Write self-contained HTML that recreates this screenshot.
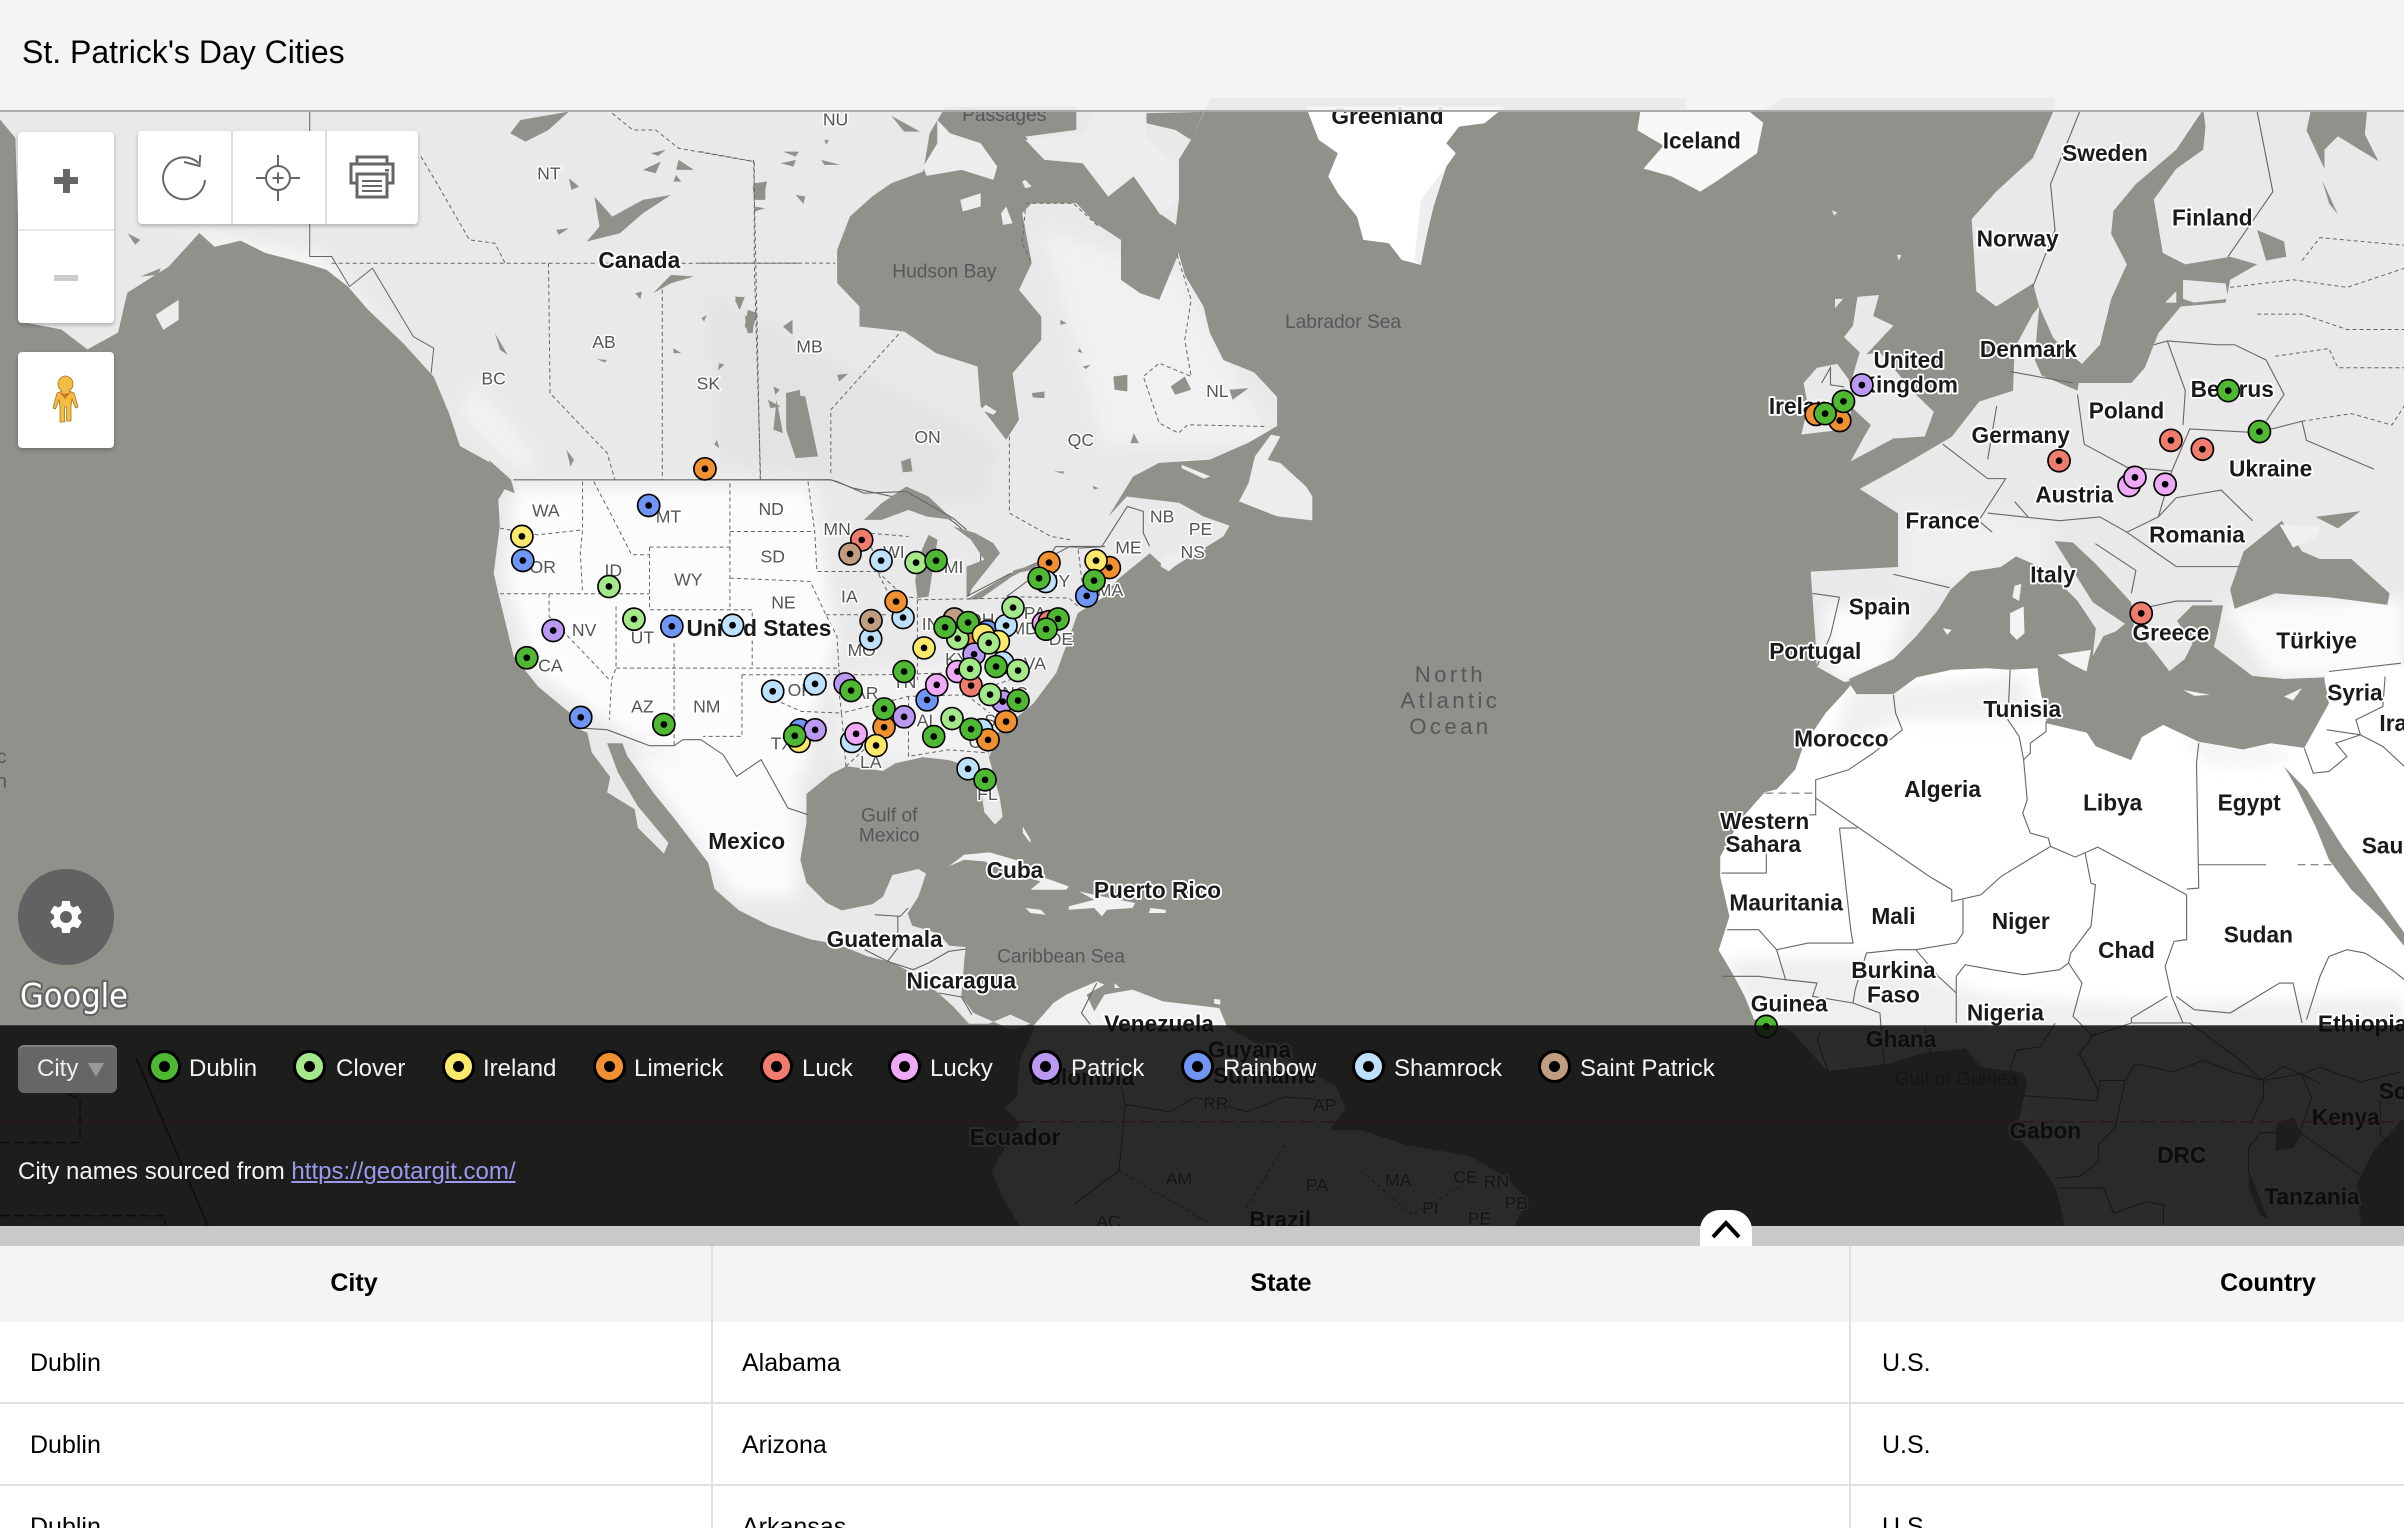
<!DOCTYPE html>
<html lang="en">
<head>
<meta charset="utf-8">
<title>St. Patrick's Day Cities</title>
<style>
html,body{margin:0;padding:0;background:#fff}
#root{position:relative;width:2404px;height:1528px;overflow:hidden;font-family:"Liberation Sans",sans-serif;color:#000}
#map{position:absolute;left:0;top:0}
.abs{position:absolute}
.c{font:bold 14.8px "Liberation Sans",sans-serif;fill:#1a1a1a;stroke:#fff;stroke-width:2.4px;paint-order:stroke;stroke-linejoin:round;text-anchor:middle}
.s{font:11.5px "Liberation Sans",sans-serif;fill:#555;stroke:#fff;stroke-width:2px;paint-order:stroke;stroke-linejoin:round;text-anchor:middle}
.w{font:12.5px "Liberation Sans",sans-serif;fill:#55575c;text-anchor:middle}
.b{fill:none;stroke:#666;stroke-width:1.1px;vector-effect:non-scaling-stroke}
.d{fill:none;stroke:#666;stroke-width:1px;stroke-dasharray:4 3;vector-effect:non-scaling-stroke}
#mk circle{r:7.2px;stroke-width:1.1px}
#mk2 circle{r:2.2px}
#z7 circle{r:33px}
#z7 circle[stroke=none]{r:10px}
.lg{position:absolute;width:33px;height:33px;top:1050px;box-sizing:border-box;border:3px solid #000;border-radius:50%}
.lg:after{content:"";position:absolute;left:8px;top:8px;width:11px;height:11px;background:#000;border-radius:50%}
.lt{position:absolute;top:1055px;font-size:24px;line-height:28px;color:#f4f4f4;white-space:nowrap}
.td{position:absolute;font-size:25px;line-height:30px;white-space:nowrap}
.th{position:absolute;font-size:25px;line-height:30px;font-weight:bold;white-space:nowrap;transform:translateX(-50%)}
.ctl{position:absolute;background:#fff;border-radius:4px;box-shadow:0 2px 4px rgba(0,0,0,.25)}
</style>
</head>
<body>
<div id="root">
<svg id="map" width="2404" height="1528" viewBox="0 0 1568 997" preserveAspectRatio="none" xmlns="http://www.w3.org/2000/svg">
<defs>
<filter id="bl" x="-20%" y="-20%" width="140%" height="140%"><feGaussianBlur stdDeviation="5"/></filter>
<polygon id="naL" points="0,60 0,78 10,90 14,210 40,215 57,228 77,217 83,191 110,174 130,152 140,161 157,157 173,165 200,172 213,176 227,187 240,202 263,224 283,246 293,270 300,291 320,302 333,313 325,326 326,343 322,374 325,387 335,428 351,448 374,467 378,476 383,478 386,491 398,507 396,517 414,528 416,540 433,557 436,550 416,526 403,504 396,485 406,485 409,493 426,517 439,533 462,563 466,580 482,594 502,604 529,613 546,616 566,624 582,628 599,637 612,648 622,657 632,668 645,668 659,662 672,668 660,672 635,661 627,650 629,626 630,618 619,617 612,609 595,604 592,596 599,585 604,570 599,567 582,571 576,585 569,590 549,594 539,589 526,576 522,561 526,537 526,518 542,505 552,500 576,503 584,498 602,494 619,496 635,501 639,509 642,530 649,538 654,533 652,520 645,494 650,483 651,478 674,459 689,439 697,417 703,400 721,389 729,378 750,361 762,372 798,350 802,343 785,337 769,328 735,324 723,337 739,311 756,302 789,300 814,289 833,278 833,259 818,243 798,235 789,217 785,200 773,180 769,166 766,155 769,130 769,104 777,91 785,74 792,60"/>
<polygon id="euL" points="1340,60 1340,71 1326,103 1302,125 1286,143 1289,190 1302,200 1326,185 1330,200 1326,205 1314,227 1313,255 1291,262 1273,285 1244,302 1235,307 1213,319 1238,335 1238,370 1181,373 1184,415 1185,435 1203,445 1208,444 1568,520 1568,60"/>
<polygon id="afL" points="1207,447 1203,452 1191,465 1176,487 1171,502 1159,515 1151,517 1135,535 1122,559 1122,572 1128,598 1121,620 1130,635 1138,650 1144,665 1168,672 1192,699 1232,694 1255,687 1282,684 1292,696 1320,700 1322,707 1318,725 1315,740 1331,760 1341,775 1347,800 1540,800 1537,773 1548,751 1568,729 1568,434 1519,438 1516,443 1519,459 1503,488 1481,485 1463,489 1434,484 1411,473 1397,481 1390,496 1367,487 1361,478 1335,472 1330,446 1329,436 1311,437 1296,436 1273,437 1250,442 1235,453 1211,453"/>
<clipPath id="cNa"><use href="#naL"/></clipPath>
<clipPath id="cEu"><use href="#euL"/></clipPath>
<clipPath id="cAf"><use href="#afL"/></clipPath>
</defs>
<rect width="1568" height="997" fill="#90918a"/>

<!-- North America -->
<use href="#naL" fill="#e9e9e9"/>
<g clip-path="url(#cNa)"><g filter="url(#bl)">
<polygon fill="#fcfcfc" points="335,318 530,318 545,420 530,470 525,505 470,505 410,480 350,440 330,380"/>
<polygon fill="#fbfbfb" points="412,490 520,505 520,585 480,585 440,530"/>
<polygon fill="#f5f5f5" points="120,150 210,165 250,215 225,215 170,185"/>
<polygon fill="#f2f2f2" points="300,270 340,310 350,300 310,250"/>
<polygon fill="#f2f2f2" points="545,440 660,430 640,495 545,495"/>
<polygon fill="#e3e3e3" points="460,190 650,290 640,330 470,300"/>
<polygon fill="#f1f1f1" points="680,150 770,180 830,290 720,290"/>
</g></g>

<!-- Hudson Bay and northern water -->
<g transform="translate(456.6,65.2) scale(.416,.2174)">
<polygon fill="#90918a" points="385,20 590,20 590,90 510,110 540,170 600,190 640,290 680,230 720,340 750,380 750,462 720,600 690,580 660,540 660,420 620,370 590,310 520,310 505,340 520,490 500,570 535,650 535,720 490,820 500,960 480,1020 440,920 435,800 370,760 320,695 250,680 250,620 215,550 215,450 235,350 270,290 300,250 350,215 360,100"/>
<polygon fill="#ededed" points="372,60 392,100 440,130 466,200 460,240 410,210 355,228 350,200 372,130"/>
<polygon fill="#ededed" points="440,280 440,320 412,335 408,300"/>
<polygon fill="#ededed" points="480,320 490,370 475,375 472,340"/>
<polygon fill="#ededed" points="510,240 520,260 510,265 505,245"/>
<polygon fill="#90918a" points="300,48 345,95 320,95"/>
<polygon fill="#90918a" points="690,40 790,36 770,120 745,90 700,70"/>
<polygon fill="#ededed" points="510,120 600,100 620,38 700,38 700,110 750,200 750,300 722,345 680,225 640,290 600,190 540,180"/>
<polygon fill="#ededed" points="448,915 465,935 460,945 440,930"/>
<polygon fill="#90918a" points="135,880 165,890 185,1070 150,1075 135,990"/>
<polygon fill="#90918a" points="120,900 130,1000 115,990"/>
<polygon fill="#90918a" points="85,250 105,245 100,290 85,295"/>
<polygon fill="#90918a" points="75,630 90,640 80,700 70,680"/>
<polygon fill="#90918a" points="648,830 670,825 670,875 650,870"/>
<polygon fill="#90918a" points="520,880 540,875 540,895 522,893"/>
<polygon fill="#90918a" points="315,1085 330,1075 333,1115 318,1118"/>
<g fill="#90918a"><polygon points="130,155 155,155 150,170"/><polygon points="190,180 220,195 195,195"/><polygon points="150,285 165,290 162,312"/><polygon points="195,120 202,120 198,135"/><polygon points="55,590 70,592 60,625"/><polygon points="130,680 145,660 145,705"/><polygon points="215,825 232,822 218,845"/><polygon points="30,790 38,795 28,812"/><polygon points="115,860 125,870 118,885"/><polygon points="565,660 575,670 565,675"/><polygon points="595,745 600,760 592,755"/><polygon points="600,800 612,795 605,808"/><polygon points="555,1115 570,1115 570,1122"/><polygon points="738,860 760,830 770,870 745,885"/><polygon points="680,1000 688,1030 675,1030"/><polygon points="615,1158 625,1165 618,1170"/><polygon points="830,870 860,865 835,900"/></g>
<!-- Newfoundland & Anticosti -->
<polygon fill="#ededed" points="895,1005 910,1010 890,1080 910,1090 950,1160 960,1190 960,1262 905,1250 845,1205 860,1150 870,1070"/>
<polygon fill="#ededed" points="755,1095 800,1130 790,1137 755,1105"/>
<polygon fill="#ededed" points="725,1370 765,1345 750,1390 735,1415 722,1400"/>
<!-- Greenland -->
<polygon fill="#fff" points="950,20 1262,20 1230,70 1190,80 1170,130 1185,160 1170,200 1150,320 1140,400 1130,495 1100,480 1080,430 1040,420 1030,350 1000,280 985,230 1000,160 970,120"/>
<polygon fill="#eeeeee" points="1170,200 1150,320 1140,400 1130,495 1120,480 1130,300"/>
<polyline class="d" points="0,155 85,185 85,490 95,1140"/>
<polyline class="d" points="0,490 212,490"/>
<polyline class="d" points="205,1120 205,930 315,695"/>
<polyline class="d" points="485,1010 485,1240 550,1310 580,1320"/>
<polyline class="d" points="510,310 585,310 625,380"/>
<polyline class="d" points="748,465 770,600 760,720 770,830 720,790 695,830 720,970 750,1000 765,975 885,980"/>
<polyline class="d" points="510,330 505,430 520,490"/>
<polyline class="b" points="205,1140 240,1165 300,1190 330,1180 400,1270 440,1340 440,1400 420,1490"/>
<polyline class="b" points="630,1340 580,1340 540,1380 490,1420"/>
<polyline class="b" points="630,1340 670,1220 695,1235 695,1300 705,1340"/>
<polyline class="b" points="0,1140 205,1140"/>
</g>

<!-- Alaska / BC lines, zoom 1 -->
<g transform="scale(.3328,.2174)">
<polygon fill="#90918a" points="1165,590 1200,650 1260,600 1315,585 1260,640 1215,700 1150,725 1175,680"/>
<polygon fill="#90918a" points="1020,360 1115,335 1075,390 1030,425 1000,400"/>
<polygon fill="#90918a" points="1280,880 1315,825 1360,830 1315,850"/>
<polygon fill="#90918a" points="1475,560 1500,545 1500,600 1478,600"/>
<polygon fill="#90918a" points="1460,950 1480,935 1475,1000 1465,1000"/>
<polygon fill="#90918a" points="1540,1180 1568,1170 1568,1300 1545,1250"/>
<polygon fill="#90918a" points="250,700 275,720 265,735"/>
<polygon fill="#90918a" points="275,830 315,805 310,825"/>
<polygon fill="#ededed" points="305,945 350,900 350,960 320,990"/>
<polygon fill="#90918a" points="0,1200 35,1180 35,1240"/>
<g fill="#90918a"><polygon points="1115,535 1135,560 1120,570"/><polygon points="1260,510 1295,485 1285,520"/><polygon points="1330,480 1360,510 1325,510"/><polygon points="1325,525 1335,545 1320,545"/><polygon points="1275,460 1305,450 1290,468"/><polygon points="1480,620 1500,625 1478,635"/><polygon points="1530,490 1560,480 1555,500"/><polygon points="1440,900 1460,890 1450,930"/><polygon points="1375,955 1385,945 1380,965"/><polygon points="1245,880 1258,875 1255,898"/><polygon points="970,1000 995,1065 980,1050"/><polygon points="1170,1078 1190,1080 1185,1088"/><polygon points="1405,1320 1410,1345 1400,1335"/><polygon points="1110,1350 1125,1380 1118,1400"/><polygon points="1320,1045 1335,1060 1320,1060"/><polygon points="1505,1200 1530,1220 1510,1225"/><polygon points="1090,690 1115,685 1095,705"/></g>
<polyline class="b" style="stroke-width:1px" points="607,335 607,770 650,770 685,860 730,805 810,1010 850,1045 845,1120"/>
<polyline class="d" points="650,790 1568,790"/>
<polyline class="d" points="1075,790 1078,1180 1190,1360 1205,1440"/>
<polyline class="d" points="1298,870 1298,1440"/>
<polyline class="d" points="1477,480 1490,1440"/>
<polyline class="d" points="1200,340 1240,390 1285,390 1330,445 1477,485"/>
<polyline class="d" points="825,470 860,560 920,720 970,730 990,790"/>
</g>

<!-- Great lakes, borders US, zoom 4 -->
<g transform="translate(313,287) scale(.2912,.2174)">
<polygon fill="#90918a" points="860,240 900,190 955,140 1005,170 1060,240 1000,230 960,210 900,240"/>
<polygon fill="#90918a" points="975,420 990,330 1005,285 1025,300 1005,470 980,475"/>
<polygon fill="#90918a" points="1060,260 1110,280 1150,310 1165,340 1100,450 1090,472 1090,380 1130,360 1100,300"/>
<polygon fill="#90918a" points="1090,480 1190,400 1232,382 1190,412 1120,478"/>
<polygon fill="#90918a" points="1195,392 1260,368 1230,392 1190,404"/>
<polygon fill="#90918a" points="20,60 70,120 78,160 40,140"/>
<polyline class="b" points="75,120 785,120 800,125 860,160 955,155 1060,235 1090,270"/>
<polyline class="b" points="1090,470 1190,400"/>
<polyline class="b" points="225,865 285,870 380,918 435,918 455,900 495,900 545,945 575,1010 630,960 690,1105 735,1125"/>
<polyline class="d" points="230,125 230,270 225,340 230,460"/>
<polyline class="d" points="45,265 130,285 230,270"/>
<polyline class="d" points="45,462 380,462"/>
<polyline class="d" points="255,125 300,240 340,345 380,345"/>
<polyline class="d" points="380,322 560,322 560,125"/>
<polyline class="d" points="380,322 380,510 560,510 610,510 610,680"/>
<polyline class="d" points="560,322 560,510"/>
<polyline class="d" points="560,275 750,275"/>
<polyline class="d" points="560,415 740,425 775,525 800,590 805,705"/>
<polyline class="d" points="735,125 750,275 755,395 890,395 930,500"/>
<polyline class="d" points="775,525 910,525"/>
<polyline class="d" points="305,500 305,685 295,720 290,840"/>
<polyline class="d" points="155,462 155,530 290,720"/>
<polyline class="d" points="305,685 800,685"/>
<polyline class="d" points="435,610 435,915"/>
<polyline class="d" points="587,705 800,705 900,705 1040,700"/>
<polyline class="d" points="587,705 587,890 500,890"/>
<polyline class="d" points="660,780 720,815 810,820 820,980"/>
<polyline class="d" points="800,705 810,820 960,770 1090,765 1230,700"/>
<polyline class="d" points="960,770 960,950 1050,930 1140,940"/>
<polyline class="d" points="980,480 980,720"/>
<polyline class="d" points="980,480 1180,475 1190,590"/>
<polyline class="d" points="1180,470 1320,475 1340,500"/>
<polyline class="d" points="1340,330 1350,440 1420,440"/>
<polyline class="d" points="890,395 950,470 980,475"/>
<polyline class="d" points="890,395 870,280 960,290"/>
<polyline class="d" points="1090,765 1170,850 1110,890"/>
<polyline class="d" points="820,980 900,880 905,850"/>
<polyline class="b" points="1340,325 1400,320"/>
<polyline class="b" points="1180,470 1250,400 1290,320 1340,322"/>
</g>

<!-- Caribbean, zoom 10 -->
<g transform="translate(326,456.6) scale(.3328,.2174)" fill="#f1f1f1">
<polygon points="880,500 910,465 960,458 1010,480 1060,530 1115,560 1110,570 1040,570 1060,545 1000,520 950,485 910,480"/>
<polygon points="1135,575 1165,585 1245,610 1240,625 1190,630 1180,650 1165,625 1115,630 1115,620 1165,600"/>
<polygon points="1030,625 1060,630 1070,645 1040,640"/>
<polygon points="1275,625 1305,630 1305,640 1272,640"/>
<polygon points="1025,380 1040,420 1040,430 1025,400"/>
<polygon points="1045,980 1085,910 1110,885 1170,845 1185,855 1150,885 1165,935 1185,885 1240,870 1300,905 1410,925 1425,980"/>
<polygon points="1400,898 1412,900 1412,915 1400,912"/>
<polygon points="1205,850 1215,865 1205,865"/>
<polyline class="b" points="735,645 785,650 800,625"/>
<polyline class="b" points="715,750 760,785 780,745 780,650"/>
<polyline class="b" points="760,785 810,810 840,790 880,755 915,748"/>
<polyline class="b" points="860,880 905,892 925,945"/>
<polyline class="b" points="1170,850 1140,940 1160,980"/>
</g>

<!-- Eurasia -->
<use href="#euL" fill="#e9e9e9"/>
<g clip-path="url(#cEu)"><g filter="url(#bl)">
<polygon fill="#fbfbfb" points="1190,395 1245,395 1230,440 1195,445"/>
<polygon fill="#fbfbfb" points="1450,395 1568,390 1568,445 1480,440"/>
<polygon fill="#efefef" points="1240,330 1340,340 1330,380 1240,380"/>
</g></g>
<!-- Iceland -->
<polygon fill="#f7f7f7" points="1070,72 1140,72 1150,80 1146,100 1120,118 1109,125 1090,115 1072,110 1085,95 1068,85"/>
<polygon fill="#ededed" points="1100,60 1170,60 1150,72 1100,72"/>

<!-- Europe water, zoom 5 -->
<g transform="translate(1109,65.2) scale(.2929,.2496)">
<polygon fill="#90918a" points="1120,25 1060,130 970,220 920,290 915,350 950,430 915,520 890,640 850,690 840,740 960,740 990,700 1020,610 1070,540 1170,530 1180,470 1240,430 1180,410 1080,430 1030,400 1010,260 1060,180 1120,130 1125,70"/>
<polygon fill="#90918a" points="755,540 785,620 800,640 850,690 840,760 760,720 745,680 750,600"/>
<polygon fill="#e9e9e9" points="1060,500 1035,530 1060,530"/>
<polygon fill="#e9e9e9" points="1075,470 1170,480 1175,520 1100,530 1075,520"/>
<polygon fill="#90918a" points="1360,25 1485,25 1480,90 1510,160 1420,95 1390,130 1390,180 1350,80"/>
<polygon fill="#90918a" points="1240,340 1300,370 1305,410 1260,420"/>
<polygon fill="#90918a" points="1385,210 1420,300 1400,270"/>
<polygon fill="#90918a" points="1180,1280 1210,1180 1295,1100 1340,1180 1380,1200 1450,1200 1535,1290 1530,1320 1400,1300 1280,1290 1190,1330"/>
<polygon fill="#90918a" points="1370,1090 1470,1075 1420,1120"/>
<polygon fill="#f0f0f0" points="1290,1110 1380,1115 1370,1145 1320,1170"/>
<!-- UK & Ireland -->
<polygon fill="#e9e9e9" points="350,515 398,510 385,565 430,590 370,665 400,660 480,770 520,815 500,880 430,885 335,945 365,880 380,850 325,790 335,740 355,660 320,620 340,590"/>
<polygon fill="#e9e9e9" points="230,740 260,700 305,690 330,730 340,780 330,860 225,875 240,800"/>
<polygon fill="#e9e9e9" points="300,520 318,520 300,545"/>
<polygon fill="#e9e9e9" points="438,405 448,405 442,420"/>
<polygon fill="#e9e9e9" points="293,288 305,295 298,302"/>
<polyline class="b" points="270,740 290,700 290,745 320,750"/>
<polyline class="b" points="845,30 780,220 790,340 740,490"/>
<polyline class="b" points="1240,30 1275,240 1175,410"/>
<polyline class="b" points="540,900 640,990 680,990 620,1100 650,1130"/>
<polyline class="b" points="660,800 640,940"/>
<polyline class="b" points="840,770 855,900 950,960 1050,970 1090,860 1240,870 1340,840 1350,890 1500,965"/>
<polyline class="b" points="1010,640 1040,630 1150,640 1190,640 1260,680 1300,770 1260,840"/>
<polyline class="b" points="1040,630 1080,760 1075,850"/>
<polyline class="b" points="1020,1090 1060,1040 1160,1020 1230,1100"/>
<polyline class="b" points="1050,970 1020,1090 950,1130"/>
<polyline class="b" points="640,1080 800,1100 890,1090 950,1130 1060,1220 1200,1220"/>
<polyline class="b" points="250,1290 310,1300 290,1400 260,1480"/>
<polyline class="b" points="430,1240 555,1275"/>
<polyline class="b" points="700,1050 730,1090"/>
<polyline class="b" points="690,710 830,740"/>
<polyline class="b" points="880,1160 970,1230 960,1290"/>
<polyline class="b" points="980,1330 1060,1310 1140,1310"/>
<polyline class="d" points="1340,420 1380,360 1568,380"/>
<polyline class="d" points="1180,490 1320,470 1440,490 1568,440"/>
<polyline class="d" points="1240,560 1340,560 1440,600 1568,600"/>
<polyline class="d" points="1280,670 1400,650 1420,700 1568,700"/>
<polyline class="d" points="1340,840 1450,820 1540,850 1568,800"/>
</g>

<!-- Mediterranean -->
<polygon fill="#90918a" points="1206,443 1235,430 1250,415 1264,398 1272,385 1285,373 1305,370 1315,363 1335,372 1355,392 1367,410 1365,428 1372,415 1380,412 1386,407 1365,393 1340,353 1352,354 1367,368 1390,393 1392,410 1405,425 1415,438 1425,430 1430,420 1420,405 1430,395 1450,395 1447,410 1444,422 1469,441 1490,443 1516,442 1530,470 1503,500 1300,500 1211,456"/>
<g transform="translate(1109,391.4) scale(.2929,.2174)" fill="#f4f4f4">
<polygon points="690,40 720,20 722,100 705,120 690,100"/>
<polygon points="795,165 870,150 860,215 830,195"/>
<polygon points="540,85 560,90 550,105"/>
<polygon points="1075,270 1135,285 1100,288"/>
<polygon points="1300,290 1340,265 1320,302"/>
</g>
<g transform="translate(1109,65.2) scale(.2929,.2496)" fill="#f0f0f0">
<polygon points="700,1270 715,1265 710,1310 695,1300"/>
</g>

<!-- Africa & Arabia -->
<use href="#afL" fill="#fff"/>
<g clip-path="url(#cAf)"><g filter="url(#bl)">
<polygon fill="#efefef" points="1125,625 1220,625 1300,650 1400,655 1568,650 1568,810 1340,810 1320,700 1200,695 1140,660"/>
<polygon fill="#f0f0f0" points="1205,450 1260,445 1320,440 1330,470 1240,470 1195,490"/>
<polygon fill="#f4f4f4" points="1420,474 1500,490 1480,500 1440,500"/>
</g></g>
<g transform="translate(1109,391.4) scale(.2929,.2174)">
<polygon fill="#90918a" points="1300,500 1350,570 1430,740 1500,870 1568,1000 1568,1040 1520,960 1450,870 1400,780 1370,680 1330,570"/>
<polyline class="b" points="430,285 435,340 450,390 385,460 330,510 257,540 257,590"/>
<polyline class="d" style="stroke-dasharray:8 5" points="145,580 255,580"/>
<polyline class="b" points="257,590 257,645 243,645"/>
<polyline class="b" points="147,760 147,820 47,820"/>
<polyline class="b" points="310,685 350,685"/>
<polyline class="b" points="310,685 335,990 340,1030 240,1030 170,1050 130,990 60,990"/>
<polyline class="b" points="257,595 510,830 560,870 560,905 625,885 670,830 780,740"/>
<polyline class="b" points="690,210 685,360 710,410 720,480"/>
<polyline class="b" points="770,365 770,395 735,430 735,460 720,480"/>
<polyline class="b" points="720,480 728,600 718,640 735,700 775,715 780,740 835,772 885,742 1083,885"/>
<polyline class="b" points="1110,430 1105,490 1110,865 1083,868"/>
<polyline class="b" points="1110,795 1260,795"/>
<polyline class="d" style="stroke-dasharray:8 5" points="1330,795 1410,795"/>
<polyline class="b" points="1083,885 1083,1020 1055,1025 1035,1100 1050,1190 1075,1270"/>
<polyline class="b" points="857,760 870,850 880,855 870,980 825,1060 820,1090 850,1150 830,1250 875,1310"/>
<polyline class="b" points="585,900 585,1000 570,1030 480,1050 440,1050 370,1060 345,1170 340,1210 400,1240 410,1400"/>
<polyline class="b" points="570,1270 570,1130 590,1095 650,1110 720,1125 800,1110 820,1090"/>
<polyline class="b" points="480,1050 530,1130 570,1180"/>
<polyline class="b" points="1060,1190 1100,1230 1180,1240 1290,1150 1320,1150 1340,1270"/>
<polyline class="b" points="170,1050 190,1140 260,1150 250,1190 340,1210"/>
<polyline class="b" points="50,1130 130,1130 190,1140"/>
<polyline class="b" points="1345,445 1365,520 1400,515 1440,470 1415,430 1470,405 1520,440 1568,500"/>
<polyline class="b" points="1400,215 1560,190"/>
<polyline class="b" points="1395,390 1470,405 1460,360 1520,320 1525,230"/>
<polyline class="b" points="1400,1070 1440,1050 1480,1060 1540,1110 1568,1140"/>
<polyline class="b" points="1400,1070 1380,1130 1350,1260"/>
<polyline class="b" points="960,1270 960,1255 1040,1190"/>
<polyline class="b" points="870,1310 960,1270 1090,1270 1160,1340 1210,1390 1250,1440 1300,1400 1380,1450"/>
<polyline class="b" points="285,1415 260,1320 270,1290"/>
<polyline class="b" points="500,1280 515,1370"/>
<polyline class="b" points="845,1360 880,1300"/>
</g>

<!-- South America (mostly under panel) -->
<g transform="translate(521.8,619.6) scale(.416,.2405)">
<polygon fill="#f1f1f1" points="370,203 345,300 340,400 320,430 345,470 300,600 320,680 345,750 1120,750 1140,680 1110,620 1050,560 950,530 880,490 830,490 855,430 840,370 690,230 660,203"/>
<polyline class="b" points="360,300 440,340 500,340 510,420 580,440 620,400 700,440 760,400 840,410"/>
<polyline class="b" points="510,420 500,600 430,690"/>
<polyline class="d" points="500,600 640,740"/>
<polyline class="d" points="760,530 700,700"/>
<polyline class="d" points="880,600 960,720 1040,640"/>
</g>
<g transform="translate(1304.6,652.3) scale(.2174,.2195)">
<polyline class="b" points="30,200 50,150 120,140 165,70"/>
<polyline class="b" points="30,200 60,285 290,300 300,240 375,240 405,190 520,215 610,180 700,215 790,240 905,220 960,200 1080,245 1200,215"/>
<polyline class="b" points="235,155 295,270"/>
<polyline class="b" points="375,240 345,380 295,430 295,480 240,525 170,530"/>
<polyline class="b" points="905,225 935,290 900,395 780,395 745,440 745,510 800,650"/>
<polyline class="b" points="900,395 1080,520"/>
<polyline class="b" points="790,240 790,290 750,370"/>
<polyline class="b" points="175,560 310,560 340,635 440,600 490,610 490,670"/>
<polyline class="b" points="1140,260 1140,400 1170,430"/>
<polygon fill="#90918a" points="830,365 880,350 905,400 880,440 825,450"/>
<polygon fill="#90918a" points="745,510 760,550 800,650 780,640 745,560"/>
</g>

<!-- Map labels under panel -->
<g>
<text class="c" x="815" y="690">Guyana</text>
<text class="c" x="825" y="707">Suriname</text>
<text class="c" x="706" y="708">Colombia</text>
<text class="c" x="662" y="747">Ecuador</text>
<text class="c" x="835" y="801">Brazil</text>
<text class="c" x="1334" y="743">Gabon</text>
<text class="c" x="1423" y="759">DRC</text>
<text class="c" x="1530" y="734">Kenya</text>
<text class="c" x="1508" y="786">Tanzania</text>
<text class="c" x="1561" y="717">So</text>
<text class="w" x="1276" y="708">Gulf of Guinea</text>
<text class="s" x="793" y="724">RR</text><text class="s" x="864" y="725">AP</text><text class="s" x="769" y="773">AM</text><text class="s" x="859" y="777">PA</text><text class="s" x="912" y="774">MA</text><text class="s" x="956" y="772">CE</text><text class="s" x="976" y="775">RN</text><text class="s" x="989" y="789">PB</text><text class="s" x="933" y="792">PI</text><text class="s" x="965" y="799">PE</text><text class="s" x="723" y="801">AC</text>
</g>

<!-- Province / state labels -->
<text class="s" x="545" y="82">NU</text><text class="s" x="358" y="117">NT</text><text class="s" x="394" y="227">AB</text><text class="s" x="322" y="251">BC</text><text class="s" x="462" y="254">SK</text><text class="s" x="528" y="230">MB</text><text class="s" x="605" y="289">ON</text><text class="s" x="705" y="291">QC</text><text class="s" x="794" y="259">NL</text><text class="s" x="758" y="341">NB</text><text class="s" x="783" y="349">PE</text><text class="s" x="778" y="364">NS</text><text class="s" x="736" y="361">ME</text><text class="s" x="356" y="337">WA</text><text class="s" x="354" y="374">OR</text><text class="s" x="436" y="341">MT</text><text class="s" x="400" y="376">ID</text><text class="s" x="449" y="382">WY</text><text class="s" x="503" y="336">ND</text><text class="s" x="504" y="367">SD</text><text class="s" x="546" y="349">MN</text><text class="s" x="583" y="364">WI</text><text class="s" x="622" y="374">MI</text><text class="s" x="511" y="397">NE</text><text class="s" x="554" y="393">IA</text><text class="s" x="381" y="415">NV</text><text class="s" x="419" y="420">UT</text><text class="s" x="562" y="428">MO</text><text class="s" x="624" y="434">KY</text><text class="s" x="607" y="411">IN</text><text class="s" x="640" y="408">OH</text><text class="s" x="675" y="404">PA</text><text class="s" x="690" y="383">NY</text><text class="s" x="724" y="389">MA</text><text class="s" x="668" y="414">MD</text><text class="s" x="692" y="421">DE</text><text class="s" x="675" y="437">VA</text><text class="s" x="662" y="456">NC</text><text class="s" x="650" y="474">SC</text><text class="s" x="640" y="488">GA</text><text class="s" x="605" y="474">AL</text><text class="s" x="590" y="449">TN</text><text class="s" x="565" y="456">AR</text><text class="s" x="522" y="454">OK</text><text class="s" x="510" y="489">TX</text><text class="s" x="568" y="501">LA</text><text class="s" x="644" y="522">FL</text><text class="s" x="359" y="438">CA</text><text class="s" x="419" y="465">AZ</text><text class="s" x="461" y="465">NM</text>

<!-- Water labels -->
<text class="w" x="655" y="79">Passages</text>
<text class="w" x="616" y="181">Hudson Bay</text>
<text class="w" x="876" y="214">Labrador Sea</text>
<text class="w" x="946" y="445" style="font-size:14.5px;letter-spacing:2.2px">North</text>
<text class="w" x="946" y="462" style="font-size:14.5px;letter-spacing:2.2px">Atlantic</text>
<text class="w" x="946" y="479" style="font-size:14.5px;letter-spacing:2.2px">Ocean</text>
<text class="w" x="580" y="536">Gulf of</text>
<text class="w" x="580" y="549">Mexico</text>
<text class="w" x="692" y="628">Caribbean Sea</text>
<text class="w" x="1" y="498">c</text>
<text class="w" x="1" y="514">n</text>

<!-- Country labels -->
<text class="c" x="905" y="81">Greenland</text><text class="c" x="1110" y="97">Iceland</text><text class="c" x="1373" y="105">Sweden</text><text class="c" x="1443" y="147">Finland</text><text class="c" x="1316" y="161">Norway</text><text class="c" x="417" y="175">Canada</text><text class="c" x="1245" y="240">United</text><text class="c" x="1245" y="256">Kingdom</text><text class="c" x="1323" y="233">Denmark</text><text class="c" x="1456" y="259">Belarus</text><text class="c" x="1387" y="273">Poland</text><text class="c" x="1178" y="270">Ireland</text><text class="c" x="1318" y="289">Germany</text><text class="c" x="1481" y="311">Ukraine</text><text class="c" x="1353" y="328">Austria</text><text class="c" x="1267" y="345">France</text><text class="c" x="1433" y="354">Romania</text><text class="c" x="1339" y="380">Italy</text><text class="c" x="1226" y="401">Spain</text><text class="c" x="495" y="415">United States</text><text class="c" x="1416" y="418">Greece</text><text class="c" x="1511" y="423">Türkiye</text><text class="c" x="1184" y="430">Portugal</text><text class="c" x="1536" y="457">Syria</text><text class="c" x="1561" y="477">Ira</text><text class="c" x="1319" y="468">Tunisia</text><text class="c" x="1201" y="487">Morocco</text><text class="c" x="1267" y="520">Algeria</text><text class="c" x="1378" y="529">Libya</text><text class="c" x="1467" y="529">Egypt</text><text class="c" x="1151" y="541">Western</text><text class="c" x="1150" y="556">Sahara</text><text class="c" x="1554" y="557">Sau</text><text class="c" x="487" y="554">Mexico</text><text class="c" x="662" y="573">Cuba</text><text class="c" x="755" y="586">Puerto Rico</text><text class="c" x="1165" y="594">Mauritania</text><text class="c" x="1235" y="603">Mali</text><text class="c" x="1318" y="606">Niger</text><text class="c" x="1473" y="615">Sudan</text><text class="c" x="577" y="618">Guatemala</text><text class="c" x="1387" y="625">Chad</text><text class="c" x="1235" y="638">Burkina</text><text class="c" x="1235" y="654">Faso</text><text class="c" x="627" y="645">Nicaragua</text><text class="c" x="1167" y="660">Guinea</text><text class="c" x="1308" y="666">Nigeria</text><text class="c" x="756" y="673">Venezuela</text><text class="c" x="1541" y="673">Ethiopia</text><text class="c" x="1240" y="683">Ghana</text>

<!-- Markers -->
<g id="mk" stroke="#000">
<circle cx="459.8" cy="305.9" fill="#f09030"/>
<circle cx="423.1" cy="329.8" fill="#6f95f5"/>
<circle cx="340.4" cy="350" fill="#fbe96a"/>
<circle cx="341" cy="365.7" fill="#6f95f5"/>
<circle cx="397.2" cy="382.7" fill="#a5e88a"/>
<circle cx="413.5" cy="404" fill="#a5e88a"/>
<circle cx="438.2" cy="408.7" fill="#6f95f5"/>
<circle cx="477.8" cy="408" fill="#bde0fb"/>
<circle cx="360.8" cy="411.4" fill="#bb99f2"/>
<circle cx="343.6" cy="429.2" fill="#4fb833"/>
<circle cx="378.8" cy="468.1" fill="#6f95f5"/>
<circle cx="433" cy="472.7" fill="#4fb833"/>
<circle cx="1184.6" cy="270.4" fill="#f09030"/>
<circle cx="1200" cy="274.4" fill="#f09030"/>
<circle cx="1214.4" cy="251.2" fill="#bb99f2"/>
<circle cx="1202.4" cy="261.9" fill="#4fb833"/>
<circle cx="1190.4" cy="269.9" fill="#4fb833"/>
<circle cx="1453.4" cy="254.9" fill="#4fb833"/>
<circle cx="1416" cy="287.3" fill="#f07c6e"/>
<circle cx="1436.5" cy="293.1" fill="#f07c6e"/>
<circle cx="1473.7" cy="281.6" fill="#4fb833"/>
<circle cx="1343" cy="300.6" fill="#f07c6e"/>
<circle cx="1388.7" cy="316.8" fill="#eeaaf5"/>
<circle cx="1392.5" cy="311.5" fill="#eeaaf5"/>
<circle cx="1412.2" cy="316" fill="#eeaaf5"/>
<circle cx="1396.6" cy="400.2" fill="#f07c6e"/>
<circle cx="1152" cy="669.7" fill="#4fb833"/>
<circle cx="504" cy="451" fill="#bde0fb"/>
</g>
<g id="mk2" fill="#000">
<circle cx="459.8" cy="305.9"/><circle cx="423.1" cy="329.8"/><circle cx="340.4" cy="350"/><circle cx="341" cy="365.7"/><circle cx="397.2" cy="382.7"/><circle cx="413.5" cy="404"/><circle cx="438.2" cy="408.7"/><circle cx="477.8" cy="408"/><circle cx="360.8" cy="411.4"/><circle cx="343.6" cy="429.2"/><circle cx="378.8" cy="468.1"/><circle cx="433" cy="472.7"/><circle cx="1200" cy="274.4"/><circle cx="1214.4" cy="251.2"/><circle cx="1202.4" cy="261.9"/><circle cx="1190.4" cy="269.9"/><circle cx="1453.4" cy="254.9"/><circle cx="1416" cy="287.3"/><circle cx="1436.5" cy="293.1"/><circle cx="1473.7" cy="281.6"/><circle cx="1343" cy="300.6"/><circle cx="1392.5" cy="311.5"/><circle cx="1412.2" cy="316"/><circle cx="1396.6" cy="400.2"/><circle cx="1152" cy="669.7"/><circle cx="504" cy="451"/>
</g>
<!-- Eastern US cluster -->
<g id="z7" transform="translate(508.8,352.3) scale(.2174)" stroke="#000" stroke-width="4.8">
<circle cx="245" cy="0" fill="#f07c6e"/><circle cx="245" cy="0" fill="#000" stroke="none"/>
<circle cx="210" cy="42" fill="#c09d7e"/><circle cx="210" cy="42" fill="#000" stroke="none"/>
<circle cx="303" cy="62" fill="#bde0fb"/><circle cx="303" cy="62" fill="#000" stroke="none"/>
<circle cx="408" cy="68" fill="#a5e88a"/><circle cx="408" cy="68" fill="#000" stroke="none"/>
<circle cx="468" cy="62" fill="#4fb833"/><circle cx="468" cy="62" fill="#000" stroke="none"/>
<circle cx="807" cy="68" fill="#f09030"/><circle cx="807" cy="68" fill="#000" stroke="none"/>
<circle cx="797" cy="125" fill="#bde0fb"/>
<circle cx="777" cy="115" fill="#4fb833"/><circle cx="777" cy="115" fill="#000" stroke="none"/>
<circle cx="988" cy="83" fill="#f09030"/><circle cx="988" cy="83" fill="#000" stroke="none"/>
<circle cx="948" cy="62" fill="#fbe96a"/><circle cx="948" cy="62" fill="#000" stroke="none"/>
<circle cx="920" cy="168" fill="#6f95f5"/><circle cx="920" cy="168" fill="#000" stroke="none"/>
<circle cx="942" cy="122" fill="#4fb833"/><circle cx="942" cy="122" fill="#000" stroke="none"/>
<circle cx="369" cy="233" fill="#bde0fb"/><circle cx="369" cy="233" fill="#000" stroke="none"/>
<circle cx="348" cy="185" fill="#f09030"/><circle cx="348" cy="185" fill="#000" stroke="none"/>
<circle cx="272" cy="297" fill="#bde0fb"/><circle cx="272" cy="297" fill="#000" stroke="none"/>
<circle cx="273" cy="242" fill="#c09d7e"/><circle cx="273" cy="242" fill="#000" stroke="none"/>
<circle cx="523" cy="237" fill="#c09d7e"/>
<circle cx="622" cy="275" fill="#6f95f5"/>
<circle cx="578" cy="300" fill="#f09030"/>
<circle cx="533" cy="296" fill="#a5e88a"/><circle cx="533" cy="296" fill="#000" stroke="none"/>
<circle cx="495" cy="262" fill="#4fb833"/><circle cx="495" cy="262" fill="#000" stroke="none"/>
<circle cx="564" cy="248" fill="#4fb833"/><circle cx="564" cy="248" fill="#000" stroke="none"/>
<circle cx="678" cy="257" fill="#bde0fb"/><circle cx="678" cy="257" fill="#000" stroke="none"/>
<circle cx="699" cy="203" fill="#a5e88a"/><circle cx="699" cy="203" fill="#000" stroke="none"/>
<circle cx="655" cy="305" fill="#fbe96a"/>
<circle cx="610" cy="285" fill="#fbe96a"/>
<circle cx="582" cy="343" fill="#bb99f2"/><circle cx="582" cy="343" fill="#000" stroke="none"/>
<circle cx="626" cy="309" fill="#a5e88a"/><circle cx="626" cy="309" fill="#000" stroke="none"/>
<circle cx="668" cy="368" fill="#bde0fb"/>
<circle cx="532" cy="395" fill="#eeaaf5"/><circle cx="532" cy="395" fill="#000" stroke="none"/>
<circle cx="573" cy="437" fill="#f07c6e"/><circle cx="573" cy="437" fill="#000" stroke="none"/>
<circle cx="570" cy="387" fill="#a5e88a"/><circle cx="570" cy="387" fill="#000" stroke="none"/>
<circle cx="648" cy="380" fill="#4fb833"/><circle cx="648" cy="380" fill="#000" stroke="none"/>
<circle cx="714" cy="392" fill="#a5e88a"/><circle cx="714" cy="392" fill="#000" stroke="none"/>
<circle cx="441" cy="480" fill="#6f95f5"/><circle cx="441" cy="480" fill="#000" stroke="none"/>
<circle cx="470" cy="435" fill="#eeaaf5"/><circle cx="470" cy="435" fill="#000" stroke="none"/>
<circle cx="668" cy="485" fill="#bb99f2"/><circle cx="668" cy="485" fill="#000" stroke="none"/>
<circle cx="630" cy="464" fill="#a5e88a"/><circle cx="630" cy="464" fill="#000" stroke="none"/>
<circle cx="714" cy="482" fill="#4fb833"/><circle cx="714" cy="482" fill="#000" stroke="none"/>
<circle cx="678" cy="545" fill="#f09030"/><circle cx="678" cy="545" fill="#000" stroke="none"/>
<circle cx="516" cy="536" fill="#a5e88a"/><circle cx="516" cy="536" fill="#000" stroke="none"/>
<circle cx="605" cy="570" fill="#bde0fb"/>
<circle cx="624" cy="600" fill="#f09030"/><circle cx="624" cy="600" fill="#000" stroke="none"/>
<circle cx="573" cy="568" fill="#4fb833"/><circle cx="573" cy="568" fill="#000" stroke="none"/>
<circle cx="461" cy="590" fill="#4fb833"/><circle cx="461" cy="590" fill="#000" stroke="none"/>
<circle cx="432" cy="324" fill="#fbe96a"/><circle cx="432" cy="324" fill="#000" stroke="none"/>
<circle cx="372" cy="395" fill="#4fb833"/><circle cx="372" cy="395" fill="#000" stroke="none"/>
<circle cx="105" cy="432" fill="#bde0fb"/><circle cx="105" cy="432" fill="#000" stroke="none"/>
<circle cx="195" cy="432" fill="#bb99f2"/>
<circle cx="213" cy="452" fill="#4fb833"/><circle cx="213" cy="452" fill="#000" stroke="none"/>
<circle cx="312" cy="562" fill="#f09030"/><circle cx="312" cy="562" fill="#000" stroke="none"/>
<circle cx="312" cy="507" fill="#4fb833"/><circle cx="312" cy="507" fill="#000" stroke="none"/>
<circle cx="372" cy="531" fill="#bb99f2"/><circle cx="372" cy="531" fill="#000" stroke="none"/>
<circle cx="215" cy="605" fill="#bde0fb"/>
<circle cx="228" cy="582" fill="#eeaaf5"/><circle cx="228" cy="582" fill="#000" stroke="none"/>
<circle cx="288" cy="617" fill="#fbe96a"/><circle cx="288" cy="617" fill="#000" stroke="none"/>
<circle cx="60" cy="570" fill="#6f95f5"/>
<circle cx="57" cy="605" fill="#fbe96a"/>
<circle cx="105" cy="570" fill="#bb99f2"/><circle cx="105" cy="570" fill="#000" stroke="none"/>
<circle cx="44" cy="588" fill="#4fb833"/><circle cx="44" cy="588" fill="#000" stroke="none"/>
<circle cx="564" cy="687" fill="#bde0fb"/><circle cx="564" cy="687" fill="#000" stroke="none"/>
<circle cx="615" cy="720" fill="#4fb833"/><circle cx="615" cy="720" fill="#000" stroke="none"/>
<circle cx="790" cy="250" fill="#eeaaf5"/>
<circle cx="808" cy="245" fill="#f07c6e"/>
<circle cx="834" cy="237" fill="#4fb833"/><circle cx="834" cy="237" fill="#000" stroke="none"/>
<circle cx="798" cy="268" fill="#4fb833"/><circle cx="798" cy="268" fill="#000" stroke="none"/>
</g>

<!-- Dark panel -->
<rect x="0" y="669" width="1568" height="131" fill="#0c0c0c" fill-opacity=".865"/>
<g transform="scale(.6523)">
<polyline fill="none" stroke="#2c1818" stroke-width="1.5" stroke-dasharray="14 6" points="0,1122 2404,1122"/>
<polyline fill="none" stroke="#110c0c" stroke-width="1.5" stroke-dasharray="10 4" points="0,1143 80,1143 80,1100 60,1090"/>
<polyline fill="none" stroke="#110c0c" stroke-width="1.5" stroke-dasharray="10 4" points="0,1216 165,1216 165,1226"/>
<polyline fill="none" stroke="#110c0c" stroke-width="1.5" points="136,1058 208,1226"/>
</g>
</svg>

<!-- Header -->
<div class="abs" style="left:0;top:0;width:2404px;height:98px;background:#f4f4f4"></div>
<div class="abs" style="left:0;top:98px;width:2404px;height:12px;background:rgba(244,244,244,.9)"></div>
<div class="abs" style="left:0;top:110px;width:2404px;height:2px;background:#a9a9a9"></div>
<div class="abs" style="left:22px;top:33px;font-size:32px;line-height:38px;color:#000;white-space:nowrap">St. Patrick's Day Cities</div>

<!-- Zoom control -->
<div class="ctl" style="left:18px;top:132px;width:96px;height:191px">
  <div class="abs" style="left:0;top:97px;width:96px;height:2px;background:#e6e6e6"></div>
  <div class="abs" style="left:36px;top:45px;width:24px;height:7px;background:#666"></div>
  <div class="abs" style="left:44.5px;top:36.5px;width:7px;height:24px;background:#666"></div>
  <div class="abs" style="left:36px;top:143px;width:24px;height:6px;background:#ccc"></div>
</div>
<!-- Pegman -->
<div class="ctl" style="left:18px;top:352px;width:96px;height:96px">
<svg class="abs" style="left:32px;top:23px" width="30" height="50" viewBox="0 0 30 50">
<path d="M15 1a8 8 0 0 1 8 8c0 3-1.500 5.500-4 7l5 2 4 14-2.500 1-3.500-9-1 7v15h-4.500V32h-2v15H10V32l-1-7-3.500 9L3 33 7 18l5-2c-2.500-1.500-4-4-4-7a8 8 0 0 1 7-8z" fill="#f4bc42" stroke="#9a7a2a" stroke-width=".8"/>
<path d="M9 17l6 7 6-7-6 2z" fill="#c9742c"/>
</svg>
</div>
<!-- Toolbar -->
<div class="ctl" style="left:138px;top:131px;width:280px;height:93px">
  <div class="abs" style="left:93px;top:0;width:2px;height:93px;background:#ddd"></div>
  <div class="abs" style="left:187px;top:0;width:2px;height:93px;background:#ddd"></div>
<svg class="abs" style="left:0;top:0" width="280" height="93" viewBox="0 0 280 93" fill="none" stroke="#666">
  <path d="M67 49A21 21 0 1 1 60.500 32" stroke-width="2"/>
  <path d="M46 31l15.500 4 .8-11" stroke-width="2"/>
  <circle cx="140" cy="47" r="12" stroke-width="2"/>
  <path d="M140 24v12M140 58v12M118 47h10M152 47h10M134.500 47h11M140 41.500v11" stroke-width="2"/>
  <path d="M219 33V26h30v7" stroke-width="3"/>
  <path d="M219 52h-6V33h42v19h-6" stroke-width="3"/>
  <rect x="219" y="43" width="30" height="23" stroke-width="3"/>
  <path d="M224 50h20M224 55h20M224 60h20" stroke-width="2"/>
  <rect x="247" y="38" width="4" height="2.500" fill="#666" stroke="none"/>
</svg>
</div>
<!-- Gear -->
<div class="abs" style="left:18px;top:869px;width:96px;height:96px;border-radius:50%;background:#626262">
<svg class="abs" style="left:28px;top:28px" width="40" height="40" viewBox="0 0 24 24"><path fill="#fff" d="M19.140 12.940c.04-.3.06-.61.06-.94 0-.32-.02-.64-.07-.94l2.030-1.580c.18-.14.23-.41.12-.61l-1.920-3.320c-.12-.22-.37-.29-.59-.22l-2.390.96c-.5-.38-1.030-.7-1.620-.94l-.36-2.540c-.04-.24-.24-.41-.48-.41h-3.840c-.24 0-.43.17-.47.41l-.36 2.540c-.59.24-1.130.57-1.620.94l-2.390-.96c-.22-.08-.47 0-.59.22L2.740 8.870c-.12.21-.08.47.12.61l2.030 1.580c-.05.3-.09.63-.09.94s.02.64.07.94l-2.030 1.580c-.18.14-.23.41-.12.61l1.920 3.320c.12.22.37.29.59.22l2.390-.96c.5.38 1.030.7 1.620.94l.36 2.540c.05.24.24.41.48.41h3.840c.24 0 .44-.17.47-.41l.36-2.540c.59-.24 1.130-.56 1.620-.94l2.390.96c.22.08.47 0 .59-.22l1.920-3.320c.12-.22.07-.47-.12-.61l-2.010-1.580zM12 15.600c-1.980 0-3.600-1.620-3.600-3.600s1.620-3.600 3.600-3.600 3.600 1.620 3.600 3.600-1.620 3.600-3.600 3.600z"/></svg>
</div>
<!-- Google -->
<svg class="abs" style="left:10px;top:970px" width="140" height="52" viewBox="0 0 140 52"><text x="10" y="37" textLength="108" lengthAdjust="spacingAndGlyphs" style="font:33px 'DejaVu Sans',sans-serif;fill:#fff;stroke:#666;stroke-width:4.500px;paint-order:stroke;stroke-linejoin:round">Google</text></svg>

<!-- Legend -->
<div class="abs" style="left:18px;top:1045px;width:99px;height:48px;border-radius:6px;background:#666;box-shadow:inset 0 2px 0 #808080"></div>
<div class="abs" style="left:37px;top:1055px;font-size:24px;line-height:28px;color:#eee">City</div>
<div class="abs" style="left:88px;top:1063px;width:0;height:0;border-left:8.500px solid transparent;border-right:8.500px solid transparent;border-top:14px solid #9a9a9a"></div>

<div class="lg" style="left:148px;background:#4fb833"></div><div class="lt" style="left:189px">Dublin</div>
<div class="lg" style="left:293px;background:#a5e88a"></div><div class="lt" style="left:336px">Clover</div>
<div class="lg" style="left:442px;background:#fbe96a"></div><div class="lt" style="left:483px">Ireland</div>
<div class="lg" style="left:593px;background:#f09030"></div><div class="lt" style="left:634px">Limerick</div>
<div class="lg" style="left:760px;background:#f07c6e"></div><div class="lt" style="left:802px">Luck</div>
<div class="lg" style="left:888px;background:#eeaaf5"></div><div class="lt" style="left:930px">Lucky</div>
<div class="lg" style="left:1029px;background:#bb99f2"></div><div class="lt" style="left:1071px">Patrick</div>
<div class="lg" style="left:1181px;background:#6f95f5"></div><div class="lt" style="left:1223px">Rainbow</div>
<div class="lg" style="left:1352px;background:#bde0fb"></div><div class="lt" style="left:1394px">Shamrock</div>
<div class="lg" style="left:1538px;background:#c09d7e"></div><div class="lt" style="left:1580px">Saint Patrick</div>

<div class="abs" style="left:18px;top:1158px;font-size:24px;line-height:28px;color:#f4f4f4;white-space:nowrap">City names sourced from <a href="#" style="color:#9a9aee;text-decoration:underline">https://geotargit.com/</a></div>

<!-- Divider band -->
<div class="abs" style="left:0;top:1226px;width:2404px;height:20px;background:#c9c9c9"></div>
<div class="abs" style="left:1700px;top:1210px;width:52px;height:36px;background:#fff;border-radius:20px 20px 0 0"></div>
<svg class="abs" style="left:1700px;top:1210px" width="52" height="36" viewBox="0 0 52 36"><path d="M13 27L26 13l13 14" fill="none" stroke="#000" stroke-width="4"/></svg>

<!-- Table -->
<div class="abs" style="left:0;top:1246px;width:2404px;height:76px;background:#f4f4f4"></div>
<div class="abs" style="left:0;top:1322px;width:2404px;height:206px;background:#fff"></div>
<div class="abs" style="left:0;top:1402px;width:2404px;height:2px;background:#e0e0e0"></div>
<div class="abs" style="left:0;top:1484px;width:2404px;height:2px;background:#e0e0e0"></div>
<div class="abs" style="left:711px;top:1246px;width:2px;height:282px;background:#e0e0e0"></div>
<div class="abs" style="left:1849px;top:1246px;width:2px;height:282px;background:#e0e0e0"></div>
<div class="th" style="left:354px;top:1268px">City</div>
<div class="th" style="left:1281px;top:1268px">State</div>
<div class="th" style="left:2268px;top:1268px">Country</div>
<div class="td" style="left:30px;top:1348px">Dublin</div><div class="td" style="left:742px;top:1348px">Alabama</div><div class="td" style="left:1882px;top:1348px">U.S.</div>
<div class="td" style="left:30px;top:1430px">Dublin</div><div class="td" style="left:742px;top:1430px">Arizona</div><div class="td" style="left:1882px;top:1430px">U.S.</div>
<div class="td" style="left:30px;top:1512px">Dublin</div><div class="td" style="left:742px;top:1512px">Arkansas</div><div class="td" style="left:1882px;top:1512px">U.S.</div>
</div>
</body>
</html>
